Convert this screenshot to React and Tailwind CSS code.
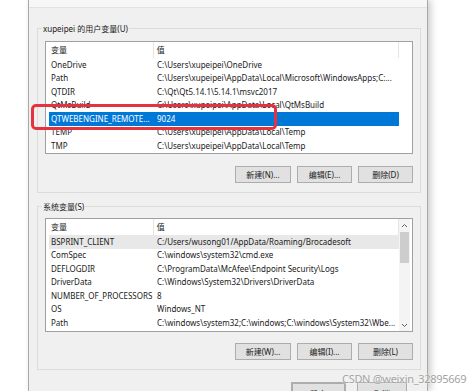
const userVars = [
  ['OneDrive', 'C:\\Users\\xupeipei\\OneDrive'],
  ['Path', 'C:\\Users\\xupeipei\\AppData\\Local\\Microsoft\\WindowsApps;C:...'],
  ['QTDIR', 'C:\\Qt\\Qt5.14.1\\5.14.1\\msvc2017'],
  ['QtMsBuild', 'C:\\Users\\xupeipei\\AppData\\Local\\QtMsBuild'],
  ['QTWEBENGINE_REMOTE...', '9024'],
  ['TEMP', 'C:\\Users\\xupeipei\\AppData\\Local\\Temp'],
  ['TMP', 'C:\\Users\\xupeipei\\AppData\\Local\\Temp'],
]

const sysVars = [
  ['BSPRINT_CLIENT', 'C:/Users/wusong01/AppData/Roaming/Brocadesoft'],
  ['ComSpec', 'C:\\windows\\system32\\cmd.exe'],
  ['DEFLOGDIR', 'C:\\ProgramData\\McAfee\\Endpoint Security\\Logs'],
  ['DriverData', 'C:\\Windows\\System32\\Drivers\\DriverData'],
  ['NUMBER_OF_PROCESSORS', '8'],
  ['OS', 'Windows_NT'],
  ['Path', 'C:\\windows\\system32;C:\\windows;C:\\windows\\System32\\Wbe...'],
]

function Chevron({ down }) {
  return (
    <svg width="7" height="5" viewBox="0 0 7 5">
      <path d={down ? 'M1 1 L3.5 3.5 L6 1' : 'M1 4 L3.5 1.5 L6 4'} fill="none" stroke="#606060" strokeWidth="1" />
    </svg>
  )
}

function VarList({ rows, height, selected, hover, scroll }) {
  return (
    <div className="flex bg-white border border-[#a0a0a0]" style={{ height }}>
      <div className="w-[353px] pl-[3px]">
        {/* header */}
        <div className="flex h-[16px] items-center">
          <div className="w-[105px] h-full pl-[2px] flex items-center border-r border-[#e5e5e5]">变量</div>
          <div className="w-[246px] h-full pl-[3px] flex items-center border-r border-[#e5e5e5]">值</div>
        </div>
        {rows.map(([k, v], i) => (
          <div
            key={k + i}
            className={`flex h-[13.5px] items-center whitespace-nowrap ${
              i === selected ? 'bg-[#0078d7] text-white' : i === hover ? 'bg-[#e8e8e8]' : ''
            }`}
          >
            <div className="w-[105px] pl-[2px] overflow-hidden">{k}</div>
            <div className="w-[245px] pl-[3px] overflow-hidden">{v}</div>
          </div>
        ))}
      </div>
      {scroll ? (
        <div className="w-[11px] flex flex-col bg-[#f4f4f4]">
          <div className="h-[12px] flex items-center justify-center"><Chevron /></div>
          <div className="flex-1 pt-[1px] px-[1px]">
            <div className="h-[31px] bg-[#cdcdcd]" />
          </div>
          <div className="h-[12px] flex items-center justify-center"><Chevron down /></div>
        </div>
      ) : (
        <div className="w-[11px]" />
      )}
    </div>
  )
}

function Btn({ children, className = '' }) {
  return (
    <div className={`h-[17px] flex items-center justify-center bg-[#e1e1e1] border border-[#adadad] ${className}`}>
      {children}
    </div>
  )
}

function Group({ title, children, className = '' }) {
  return (
    <fieldset className={`ml-[8px] w-[384px] border border-[#dcdcdc] px-[7px] pb-[9px] ${className}`}>
      <legend className="-ml-[3px] px-[1px] leading-[13px]">{title}</legend>
      {children}
    </fieldset>
  )
}

export default function App() {
  return (
    <div
      className="relative w-[474px] h-[391px] overflow-hidden bg-white text-[8px] text-[#1a1a1a]"
      style={{ fontFamily: '"Noto Sans", "Noto Sans CJK SC", sans-serif' }}
    >
      <div className="ml-[28px] w-[400px] h-[391px] bg-[#f0f0f0] border-x border-[#a8a8a8] shadow-[3px_0_7px_rgba(0,0,0,0.2)]">
        <div className="h-[8px] bg-[#f7f7f7] border-b border-[#e2e2e2]" />

        <Group title="xupeipei 的用户变量(U)" className="mt-[14px] pt-[6px]">
          <VarList rows={userVars} height={113} selected={4} />
          <div className="flex justify-end gap-[6px] mt-[12px]">
            <Btn className="w-[56px]">新建(N)...</Btn>
            <Btn className="w-[55px]">编辑(E)...</Btn>
            <Btn className="w-[55px]">删除(D)</Btn>
          </div>
        </Group>

        <Group title="系统变量(S)" className="mt-[7px] pt-[5px]">
          <VarList rows={sysVars} height={114} hover={0} scroll />
          <div className="flex justify-end gap-[6px] mt-[11px]">
            <Btn className="w-[56px]">新建(W)...</Btn>
            <Btn className="w-[55px]">编辑(I)...</Btn>
            <Btn className="w-[55px]">删除(L)</Btn>
          </div>
        </Group>

        <div className="flex mt-[12px] pl-[262px] gap-[11px]">
          <Btn className="w-[55px] h-[20px] border-[#0078d7] border-2 pt-[4px]">确定</Btn>
          <Btn className="w-[50px] h-[20px] pt-[4px]">取消</Btn>
        </div>
      </div>

      {/* red highlight box */}
      <div className="absolute left-[31px] top-[104px] w-[246px] h-[26px] border-[3px] border-[#e5323f] rounded-[5px]" />

      {/* watermark */}
      <div
        className="absolute left-[342px] top-[371px] text-[11px] tracking-[-0.3px] text-[#a3a3a3] whitespace-nowrap"
        style={{ textShadow: '0 0 2px #fff' }}
      >
        CSDN @weixin_32895669
      </div>
    </div>
  )
}
